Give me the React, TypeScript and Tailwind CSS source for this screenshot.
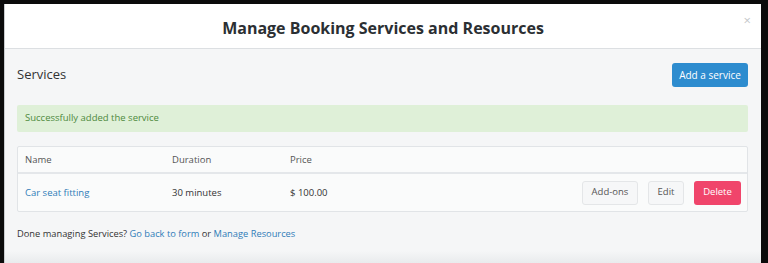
export default function App() {
  return (
    <div className="h-[263px] w-[768px] overflow-hidden bg-[#0b0b0b] pt-[4px] pl-[4px] pr-[7px]" style={{ fontFamily: '"Open Sans", sans-serif' }}>
      <div className="flex h-full flex-col overflow-hidden border-l border-[#c9cccf] bg-[#f5f6f7]">
        {/* Header */}
        <div className="relative flex h-[45px] shrink-0 items-center justify-center border-b border-[#dcdfe2] bg-white pt-[3px]">
          <h1 className="text-[16px] font-bold text-[#2b2f33]">Manage Booking Services and Resources</h1>
          <span className="absolute top-[10px] right-[10px] text-[13px] leading-none text-[#c4c7ca]">×</span>
        </div>

        {/* Body */}
        <div className="flex flex-col pr-[13px] pl-[12px] pt-[14px]">
          <div className="flex items-center justify-between">
            <h2 className="text-[13px] text-[#333]">Services</h2>
            <button className="h-[24px] w-[76px] rounded-[3px] bg-[#2d8ccf] text-[10px] text-white">Add a service</button>
          </div>

          <div className="mt-[18px] flex h-[27px] items-center rounded-[2px] bg-[#dff0d8] px-[8px] text-[9.5px] text-[#4e8a3d]">
            Successfully added the service
          </div>

          <div className="mt-[14px] rounded-[2px] border border-[#e1e4e7] bg-[#fafbfb] text-[9.5px] text-[#333]">
            <div className="flex h-[27px] items-center border-b-2 border-[#e4e7ea] px-[7px] pt-[2px] text-[#555]">
              <span className="w-[147px]">Name</span>
              <span className="w-[118px]">Duration</span>
              <span>Price</span>
            </div>
            <div className="flex h-[37px] items-center pr-[6px] pl-[7px]">
              <span className="w-[147px] pt-[2px] text-[#2f7cb8]">Car seat fitting</span>
              <span className="w-[118px] pt-[2px]">30 minutes</span>
              <span className="pt-[2px]">$ 100.00</span>
              <div className="ml-auto flex gap-[10px]">
                <button className="h-[24px] w-[56px] rounded-[3px] border border-[#e4e6e8] bg-[#f6f7f8] text-[9.5px] text-[#555]">Add-ons</button>
                <button className="h-[24px] w-[36px] rounded-[3px] border border-[#e4e6e8] bg-[#f6f7f8] text-[9.5px] text-[#555]">Edit</button>
                <button className="h-[24px] w-[47px] rounded-[3px] bg-[#f0456b] text-[9.5px] text-white">Delete</button>
              </div>
            </div>
          </div>

          <p className="mt-[15px] text-[9.3px] text-[#333]">
            Done managing Services? <span className="text-[#2f7cb8]">Go back to form</span> or{" "}
            <span className="text-[#2f7cb8]">Manage Resources</span>
          </p>
        </div>
        <div className="mt-auto h-[12px] bg-gradient-to-b from-[#f5f6f7] to-[#e9ebed]" />
      </div>
    </div>
  )
}
